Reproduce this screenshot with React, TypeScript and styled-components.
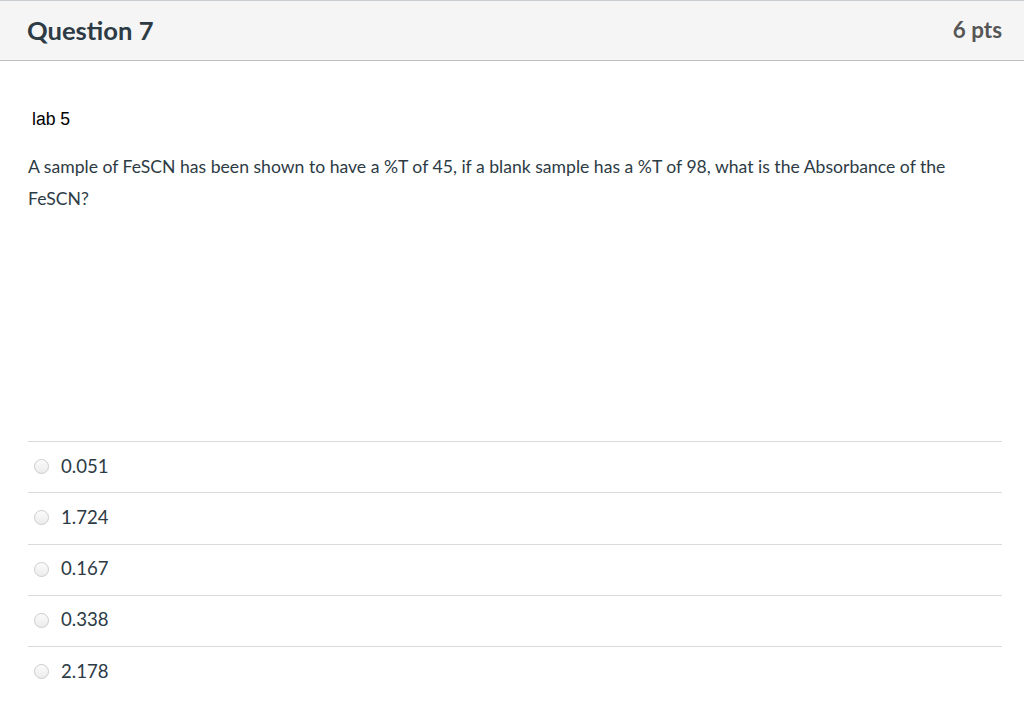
import React from "react";
import styled, { createGlobalStyle } from "styled-components";

const Global = createGlobalStyle`
  html, body { margin: 0; padding: 0; background: #fff; }
  body { font-family: Lato, "Noto Sans", sans-serif; color: #2d3b45; }
`;

const Page = styled.div`
  width: 1024px;
  display: flex;
  flex-direction: column;
`;

const Header = styled.div`
  display: flex;
  align-items: center;
  justify-content: space-between;
  box-sizing: border-box;
  height: 61px;
  padding: 0 22px 2px 27px;
  background: #f5f5f5;
  border-top: 1px solid #c7cdd1;
  border-bottom: 1px solid #b9bec2;
`;

const Title = styled.h2`
  margin: 0;
  font-family: Lato, sans-serif;
  font-weight: 700;
  font-size: 25.6px;
  color: #2d3b45;
`;

const Points = styled.span`
  font-family: Lato, sans-serif;
  font-weight: 700;
  font-size: 22.4px;
  color: #565656;
`;

const Body = styled.div`
  display: flex;
  flex-direction: column;
  padding: 47px 22px 0 28px;
`;

const Tag = styled.p`
  margin: 0 0 0 4px;
  font-family: "Liberation Sans", Arial, sans-serif;
  font-size: 17.6px;
  line-height: 22px;
  color: #000;
`;

const QuestionText = styled.p`
  margin: 21px 0 0 0;
  font-family: Lato, sans-serif;
  font-size: 17.6px;
  line-height: 32px;
  color: #2d3b45;
  max-width: 974px;
`;

const Answers = styled.div`
  display: flex;
  flex-direction: column;
  margin-top: 226px;
`;

const Answer = styled.label`
  display: flex;
  align-items: center;
  gap: 12px;
  height: 47.25px;
  padding: 0 0 3px 6px;
  border-top: 1px solid #dadada;
  font-family: Lato, sans-serif;
  font-size: 18.6px;
  line-height: 22px;
  color: #2d3b45;
`;

const Radio = styled.span`
  flex: none;
  width: 15px;
  height: 15px;
  border-radius: 50%;
  border: 1px solid #c9cdd0;
  background: linear-gradient(#fbfbfb, #ececec);
  box-sizing: border-box;
  margin-top: 2px;
`;

const options = ["0.051", "1.724", "0.167", "0.338", "2.178"];

export default function App() {
  return (
    <Page>
      <Global />
      <Header>
        <Title>Question 7</Title>
        <Points>6 pts</Points>
      </Header>
      <Body>
        <Tag>lab 5</Tag>
        <QuestionText>
          A sample of FeSCN has been shown to have a %T of 45, if a blank sample has a %T of 98, what is the Absorbance of the FeSCN?
        </QuestionText>
        <Answers>
          {options.map((o) => (
            <Answer key={o}>
              <Radio />
              <span>{o}</span>
            </Answer>
          ))}
        </Answers>
      </Body>
    </Page>
  );
}
